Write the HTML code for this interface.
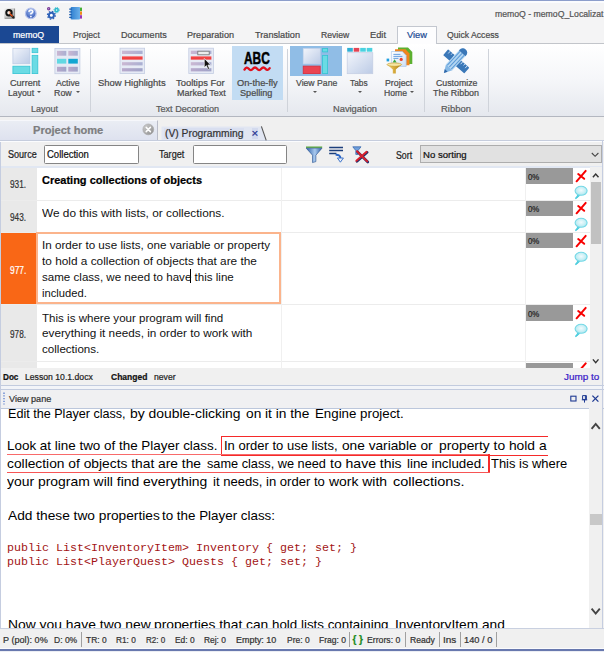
<!DOCTYPE html>
<html lang="en">
<head>
<meta charset="utf-8">
<title>memoQ - memoQ_Localization</title>
<style>
html,body{margin:0;padding:0;background:#fff;}
body{width:604px;height:652px;overflow:hidden;position:relative;font-family:"Liberation Sans",sans-serif;}
#app{position:absolute;left:0;top:0;width:604px;height:652px;overflow:hidden;background:#f0f0f0;}
#app div,#app span,#app svg{position:absolute;}
.t{-webkit-text-stroke:0.22px currentColor;position:absolute;line-height:20px;white-space:nowrap;transform-origin:0 0;z-index:5;font-family:"Liberation Sans",sans-serif;}
.m{font-family:"Liberation Mono",monospace;}
/* title */
#topline{left:0;top:0;width:604px;height:1.4px;background:#8d9ecb;}
#topline2{left:0;top:1.4px;width:604px;height:1.6px;background:#fbfcfe;}
#title{left:0;top:3px;width:604px;height:23px;background:#f4f4f5;}
#tabrow{left:0;top:26px;width:604px;height:17.6px;background:#f4f4f5;border-bottom:1px solid #c2c5ca;box-sizing:border-box;}
#memoqtab{left:0;top:26px;width:58.5px;height:17px;background:#1b4893;}
#viewtab{left:396.5px;top:26px;width:40px;height:18px;background:#fdfdfe;border:1px solid #c3c7cf;border-bottom:none;box-sizing:border-box;}
#ribbon{left:0;top:43.6px;width:604px;height:72.5px;background:linear-gradient(#ffffff,#f5f6f9 50%,#e5e8ee);}
#ribbonline{left:0;top:116.1px;width:604px;height:1.2px;background:#b3b7c0;}
#ribbongap{left:0;top:117.2px;width:604px;height:0.1px;background:#f0f0f0;}
.rsep{width:1px;top:49px;height:63px;background:#cfd3da;}
.hl{background:#c2dcf3;}
.arrow{width:0;height:0;border-left:2px solid transparent;border-right:2px solid transparent;border-top:2.5px solid #555;}
/* doc tab strip */
#tabstrip{left:0;top:117.3px;width:604px;height:23px;background:#f0f0f0;}
#phtab{left:0;top:119.5px;width:157.6px;height:20.8px;background:linear-gradient(#eaedf4,#dee2ef);border-right:1px solid #b9bcc8;border-top:1px solid #f6f7fb;box-sizing:border-box;}
#progtab{left:251.7px;top:128px;width:6.7px;height:10.6px;background:#d3daee;}
#proghl{left:163.5px;top:127.8px;width:80.7px;height:11px;background:#d9dff0;}
#tabline{left:0;top:140.3px;width:604px;height:1px;background:#c6cddd;}
#tabline2{left:0;top:141.3px;width:604px;height:1.4px;background:#fbfcfe;}
/* filter */
#filter{left:0;top:142px;width:604px;height:25px;background:#f0f0f0;}
.inp{background:#fff;border:1px solid #858585;border-radius:1.5px;box-sizing:border-box;}
#sortsel{left:420px;top:145.4px;width:182px;height:17.3px;background:#e1e1e1;border:1px solid #adadad;box-sizing:border-box;}
/* grid */
#grid{left:0;top:167px;width:590px;height:201px;background:#fff;overflow:hidden;}
.num{left:0;width:36.5px;background:#e9e9e9;}
.hline{left:0;width:590px;height:1px;background:#ececec;}
.vline{top:0;width:1px;height:201px;background:#f0f0f0;}
.pct{left:526px;width:46.5px;height:15.5px;background:#999;}
#gscroll{left:590px;top:167px;width:12px;height:201px;background:#f0f0f0;}
#gthumb{left:590.5px;top:182px;width:10.5px;height:61.5px;background:#c1c1c1;}
/* doc bar */
#docbar{left:0;top:368px;width:604px;height:16.5px;background:#f0f0f0;}
#split1{left:0;top:384.5px;width:604px;height:1.5px;background:#c2cbde;}
#split2{left:0;top:386px;width:604px;height:3px;background:#f2f4f8;}
#split3{left:0;top:389px;width:604px;height:1px;background:#c2cbde;}
#vphead{left:0;top:390px;width:604px;height:18.7px;background:#f0f0f2;border-bottom:1px solid #bcc7dc;box-sizing:border-box;}
#vp{left:1.3px;top:408.7px;width:587.7px;height:219.8px;background:#fff;overflow:hidden;}
#vp .t{z-index:1;-webkit-text-stroke:0;}
.ns{-webkit-text-stroke:0 !important;}
#vpscroll{left:589px;top:408px;width:13px;height:220.5px;background:#f0f0f0;}
#vpthumb{left:589.5px;top:513.5px;width:12px;height:11.5px;background:#c8c8c8;}
.redl{background:#f52a2a;}
/* status */
#status{left:0;top:628.2px;width:604px;height:19.8px;background:#f0f0f0;border-top:0.9px solid #c9d0e0;box-sizing:border-box;}
#botline{left:0;top:648px;width:604px;height:4px;background:linear-gradient(#fbfbfd 0,#fbfbfd 35%,#6878ae 36%,#6878ae 72%,#eceef4 73%);}
.ssep{top:631.5px;width:1px;height:15px;background:#a0a0a0;}
#lborder{left:0;top:142px;width:1.2px;height:487px;background:#c5cde0;}
#rborder{left:602.3px;top:140.3px;width:1.2px;height:488.7px;background:#c5cde0;}
</style>
</head>
<body>
<div id="app">
<div id="topline"></div><div id="topline2"></div>
<div id="title"></div>
<div id="tabrow"></div>
<div id="memoqtab"></div>
<div id="ribbon"></div>
<div id="viewtab"></div>
<div id="ribbonline"></div><div id="ribbongap"></div>
<!-- ribbon highlights -->
<div class="hl" style="left:231.5px;top:46px;width:51.5px;height:53.5px;"></div>
<div class="hl" style="left:290px;top:46px;width:51.5px;height:30px;background:#90bde6;"></div>
<div class="rsep" style="left:89.5px;"></div>
<div class="rsep" style="left:287px;"></div>
<div class="rsep" style="left:424px;"></div>
<div class="rsep" style="left:487.5px;"></div>
<!-- quick access icons -->
<svg style="left:3px;top:6px;" width="84" height="16" viewBox="3 6 84 16">
  <defs>
    <linearGradient id="gq" x1="0" y1="0" x2="1" y2="1"><stop offset="0" stop-color="#f4f4f4"/><stop offset="1" stop-color="#9a9a9a"/></linearGradient>
    <linearGradient id="gqo" x1="0" y1="0" x2="1" y2="0"><stop offset="0.3" stop-color="#fff"/><stop offset="1" stop-color="#f0621c"/></linearGradient>
    <radialGradient id="gh" cx="0.5" cy="0.35" r="0.7"><stop offset="0" stop-color="#9db8ee"/><stop offset="1" stop-color="#2a4fb0"/></radialGradient>
    <linearGradient id="gn" x1="0" y1="0" x2="1" y2="0"><stop offset="0" stop-color="#2f7fd0"/><stop offset="1" stop-color="#6ab0ea"/></linearGradient>
  </defs>
  <rect x="4.2" y="8.2" width="10.8" height="10.4" rx="1" fill="url(#gq)"/>
  <path d="M14.6 8.6 V18.3 H4.6" fill="none" stroke="#8a8a8a" stroke-width="0.9"/>
  <circle cx="9" cy="12.7" r="2.7" fill="url(#gqo)" stroke="#111" stroke-width="2"/>
  <path d="M10.6 14.6 L13.4 17.4" stroke="#222" stroke-width="2.2" stroke-linecap="round"/>
  <path d="M10.4 14.2 L12.2 16" stroke="#e8501a" stroke-width="1.4" stroke-linecap="round"/>
  <circle cx="30.8" cy="13.4" r="5.3" fill="url(#gh)" stroke="#b4c2ec" stroke-width="1.3"/>
  <path d="M28.9 11.9 Q29 10 30.9 10 Q32.8 10 32.8 11.7 Q32.8 12.8 30.9 13.6 L30.9 14.6" fill="none" stroke="#fff" stroke-width="1.5"/>
  <circle cx="30.9" cy="16.6" r="0.9" fill="#fff"/>
  <!-- gears -->
  <circle cx="51.4" cy="15.3" r="2.5" fill="#fff" stroke="#2f62b8" stroke-width="2"/>
  <circle cx="51.4" cy="15.3" r="3.9" fill="none" stroke="#2f62b8" stroke-width="1.3" stroke-dasharray="1.5 1.56"/>
  <circle cx="48.7" cy="8.7" r="1.1" fill="#fff" stroke="#7a3a9a" stroke-width="1.3"/>
  <circle cx="56.6" cy="10.1" r="1.6" fill="#d8f6fa" stroke="#2cb8cc" stroke-width="1.6"/>
  <circle cx="56.6" cy="10.1" r="2.7" fill="none" stroke="#2cb8cc" stroke-width="0.9" stroke-dasharray="1.1 1.02"/>
  <!-- notebook -->
  <rect x="79.3" y="7.6" width="2.7" height="3.4" fill="#45b035"/>
  <rect x="79.3" y="11.4" width="2.7" height="3.4" fill="#f08a1c"/>
  <rect x="79.3" y="15.2" width="2.7" height="3.4" fill="#9a35b5"/>
  <rect x="70.6" y="7" width="9.4" height="12.4" rx="1" fill="url(#gn)"/>
  <path d="M69.2 9.2h2.6M69.2 11.9h2.6M69.2 14.6h2.6M69.2 17.3h2.6" stroke="#1f5fb0" stroke-width="1.3"/>
</svg>
<!-- ribbon: Current Layout -->
<svg style="left:12px;top:47px;" width="27" height="28" viewBox="12 47 27 28">
  <defs>
    <linearGradient id="gp" x1="0" y1="0" x2="1" y2="1"><stop offset="0" stop-color="#f2f5fb"/><stop offset="1" stop-color="#bccbe6"/></linearGradient>
    <linearGradient id="gs" x1="0" y1="0" x2="1" y2="0"><stop offset="0" stop-color="#cbb7d2"/><stop offset="1" stop-color="#a9afd2"/></linearGradient>
    <linearGradient id="gs2" x1="0" y1="0" x2="1" y2="0"><stop offset="0" stop-color="#b9a9cc"/><stop offset="1" stop-color="#9fa3c8"/></linearGradient>
    <linearGradient id="gr" x1="0" y1="0" x2="0" y2="1"><stop offset="0" stop-color="#f87a7a"/><stop offset="0.5" stop-color="#ee3030"/><stop offset="1" stop-color="#f46a6a"/></linearGradient>
  </defs>
  <rect x="12.9" y="48.3" width="17" height="15.5" fill="url(#gp)" stroke="#b9c8e2" stroke-width="0.7"/>
  <rect x="12.9" y="66.2" width="17" height="7.4" fill="#6adbe4" stroke="#35c3d3" stroke-width="0.8"/>
  <rect x="32.1" y="48.3" width="5.7" height="4.4" fill="#6adbe4" stroke="#35c3d3" stroke-width="0.8"/>
  <rect x="32.1" y="55.3" width="5.7" height="18.3" fill="#6adbe4" stroke="#35c3d3" stroke-width="0.8"/>
</svg>
<!-- Active Row -->
<svg style="left:54px;top:47px;" width="27" height="28" viewBox="54 47 27 28">
  <rect x="54.9" y="48.4" width="25" height="25.3" fill="#e6eaf5" stroke="#c3cce2" stroke-width="0.8"/>
  <rect x="57" y="50.9" width="9.3" height="4.8" fill="url(#gs)"/><rect x="68.3" y="50.9" width="9.5" height="4.8" fill="url(#gs)"/>
  <rect x="57" y="58.8" width="9.3" height="4.8" fill="#62d8e2"/><rect x="68.3" y="58.8" width="9.5" height="4.8" fill="#12a6d2"/>
  <rect x="57" y="66.8" width="9.3" height="4.8" fill="url(#gs2)"/><rect x="68.3" y="66.8" width="9.5" height="4.8" fill="url(#gs2)"/>
</svg>
<!-- Show Highlights -->
<svg style="left:119px;top:47px;" width="27" height="28" viewBox="119 47 27 28">
  <rect x="120" y="48.2" width="24.6" height="25.3" fill="#e6eaf5" stroke="#c3cce2" stroke-width="0.8"/>
  <rect x="122" y="50.7" width="20.6" height="3.3" fill="url(#gs)"/>
  <rect x="122" y="56.2" width="20.6" height="3.6" fill="url(#gr)"/>
  <rect x="122" y="62.2" width="20.6" height="3.2" fill="url(#gs)"/>
  <rect x="122" y="68.2" width="20.6" height="3.2" fill="url(#gs2)"/>
</svg>
<!-- Tooltips -->
<svg style="left:188px;top:47px;" width="27" height="28" viewBox="188 47 27 28">
  <rect x="188.8" y="48.2" width="24.6" height="25.3" fill="#e6eaf5" stroke="#c3cce2" stroke-width="0.8"/>
  <rect x="190.8" y="50.7" width="20.6" height="3.3" fill="url(#gs)"/>
  <rect x="190.8" y="56.2" width="20.6" height="3.6" fill="url(#gr)"/>
  <rect x="190.8" y="62.2" width="20.6" height="3.2" fill="url(#gs)"/>
  <rect x="190.8" y="68.2" width="20.6" height="3.2" fill="url(#gs2)"/>
  <rect x="197.8" y="51.2" width="11.4" height="3.6" fill="#ececec" stroke="#707070" stroke-width="0.8"/>
  <path d="M204.3 58.4 L204.3 67.6 L206.4 65.6 L208 69.4 L209.5 68.7 L207.9 65 L210.6 64.9 Z" fill="#111" stroke="#fff" stroke-width="0.6"/>
</svg>
<!-- ABC wavy underline -->
<svg style="left:243px;top:65px;" width="29" height="8" viewBox="243 65 29 8">
  <path d="M244.5 69.6 Q246.6 66.2 248.7 68.8 T252.9 68.8 T257.1 68.8 T261.3 68.8 T265.5 68.8 T269.7 68.2" fill="none" stroke="#e0101c" stroke-width="2.3" stroke-linecap="round"/>
</svg>
<!-- View Pane -->
<svg style="left:302px;top:47px;" width="27" height="28" viewBox="302 47 27 28">
  <rect x="303.2" y="48.5" width="17" height="15.4" fill="url(#gp)" stroke="#c6d3ea" stroke-width="0.6"/>
  <rect x="303.2" y="66.1" width="17" height="7.5" fill="#ea4452" stroke="#d82c3c" stroke-width="0.8"/>
  <rect x="322.6" y="48.5" width="5" height="3.4" fill="#6adbe4" stroke="#35c3d3" stroke-width="0.8"/>
  <rect x="322.6" y="55.4" width="5" height="18.2" fill="#6adbe4" stroke="#35c3d3" stroke-width="0.8"/>
</svg>
<!-- Tabs -->
<svg style="left:346px;top:47px;" width="28" height="28" viewBox="346 47 28 28">
  <rect x="347.2" y="52.7" width="25.6" height="21" fill="url(#gp)" stroke="#c3cce2" stroke-width="0.7"/>
  <rect x="347.2" y="47.9" width="5.6" height="3.8" fill="#2fb0d4"/>
  <rect x="353.7" y="47.9" width="5.6" height="3.8" fill="#e24454"/>
  <rect x="360.2" y="47.9" width="5.6" height="3.8" fill="#4ad2e0"/>
  <rect x="366.7" y="47.9" width="5.6" height="3.8" fill="#4ad2e0"/>
</svg>
<!-- Project Home -->
<svg style="left:385px;top:46px;" width="29" height="29" viewBox="385 46 29 29">
  <defs>
    <linearGradient id="gf" x1="0" y1="0" x2="1" y2="0"><stop offset="0" stop-color="#f3dc8c"/><stop offset="0.5" stop-color="#d6a93a"/><stop offset="1" stop-color="#a87c1c"/></linearGradient>
    <linearGradient id="gd" x1="0" y1="0" x2="1" y2="1"><stop offset="0" stop-color="#ffffff"/><stop offset="1" stop-color="#cfe0f6"/></linearGradient>
  </defs>
  <path d="M398 47.6 H408 L412.3 52 V63.9 H398 Z" fill="#5cb030"/>
  <path d="M395 49.3 H405.5 L409.5 53.4 V65.2 H395 Z" fill="#f0841e"/>
  <path d="M391.4 51.5 H402.4 L406.2 55.4 V66.4 H391.4 Z" fill="url(#gd)" stroke="#9fc0ea" stroke-width="0.6"/>
  <path d="M393.4 54.4h7M393.4 56.4h9M393.4 58.4h5" stroke="#5a96dc" stroke-width="0.9"/>
  <circle cx="401.2" cy="59.4" r="1.6" fill="#ea4030"/>
  <path d="M394.6 59.2 L396.6 62.4 H392.6 Z" fill="#3aa840"/>
  <rect x="386.6" y="58.6" width="2.6" height="2.8" fill="#20a0e0"/>
  <path d="M387 64.6 Q394.3 61.6 401.6 64.6 L395.8 69.6 V73.4 H392.8 V69.6 Z" fill="url(#gf)"/>
  <ellipse cx="394.3" cy="64.6" rx="7.3" ry="1.7" fill="#f6e6a4" stroke="#c49a30" stroke-width="0.6"/>
</svg>
<!-- Customize the ribbon -->
<svg style="left:441px;top:46px;" width="30" height="29" viewBox="441 46 30 29">
  <g transform="rotate(41 456.2 61.4)">
    <rect x="442.2" y="57.6" width="28" height="7.6" rx="0.6" fill="#3b78b8"/>
    <path d="M445 57.6v3M448 57.6v2M451 57.6v3M461.4 57.6v3M464.4 57.6v2M467.4 57.6v3" stroke="#cfe2f6" stroke-width="0.9"/>
  </g>
  <g transform="rotate(-47 454.8 61.2)">
    <path d="M446.6 56.8 H466 Q470.6 56.8 470.6 61.2 Q470.6 65.6 466 65.6 H446.6 Z" fill="#b4d7f3"/>
    <path d="M446.6 58.4H465.5M446.6 61.2H465.5M446.6 64H465.5" stroke="#5c9ad6" stroke-width="1"/>
    <path d="M465.6 56.8 Q470.8 56.8 470.8 61.2 Q470.8 65.6 465.6 65.6 Z" fill="#3b78b8"/>
    <path d="M446.6 56.8 L438.8 61.2 L446.6 65.6 Z" fill="#86b9e6"/>
    <path d="M442.2 59.3 L438.8 61.2 L442.2 63.1 Z" fill="#2f66a8"/>
  </g>
</svg>

<div class="arrow" style="left:37px;top:90.5px;"></div>
<div class="arrow" style="left:75.5px;top:90.5px;"></div>
<div class="arrow" style="left:313px;top:91px;"></div>
<div class="arrow" style="left:357.5px;top:91px;"></div>
<div class="arrow" style="left:410px;top:90.5px;"></div>

<div id="tabstrip"></div>
<div id="phtab"></div>
<svg style="left:160px;top:125px;" width="110" height="17" viewBox="160 125 110 17"><path d="M161.5 126.5 H261.4 L266.2 140.4 H161.5 Z" fill="#e1e6f2"/></svg>
<div id="proghl"></div><div id="progtab"></div>
<div id="tabline"></div><div id="tabline2"></div>
<div id="filter"></div>
<div class="inp" style="left:44px;top:145px;width:95px;height:18.5px;"></div>
<div class="inp" style="left:192.5px;top:145px;width:94.5px;height:18.5px;"></div>
<div id="sortsel"></div>

<div id="grid">
  <div class="num" style="top:0;height:65.5px;"></div>
  <div class="num" style="top:65.5px;height:72px;background:#f96716;"></div>
  <div class="num" style="top:137.5px;height:63.5px;"></div>
  <div class="hline" style="top:33px;"></div>
  <div class="hline" style="top:65px;"></div>
  <div class="hline" style="top:137px;"></div>
  <div class="hline" style="top:193.5px;"></div>
  <div class="vline" style="left:281px;"></div>
  <div class="vline" style="left:525px;"></div>
  <div style="left:36.3px;top:65.3px;width:244.7px;height:71.7px;border:2.3px solid #fbb48c;box-sizing:border-box;background:#fff;"></div>
  <div style="left:190px;top:102px;width:1px;height:14px;background:#000;"></div>
  <div class="pct" style="top:1px;"></div>
  <div class="pct" style="top:33.5px;"></div>
  <div class="pct" style="top:65.9px;"></div>
  <div class="pct" style="top:138.3px;"></div>
  <div class="pct" style="top:195.5px;"></div>
</div>
<div style="left:0;top:166.2px;width:602.3px;height:2px;background:#e1e7f2;"></div>
<div id="gscroll"></div><div id="gthumb"></div>
<div id="docbar"></div>
<div id="split1"></div><div id="split2"></div><div id="split3"></div>
<div id="vphead"></div>
<div id="vp">
<span class="t" style="left:6.3px;top:-4.9px;font-size:13.4px;color:#000;transform:scaleX(0.9404);">Edit the Player class,</span>
<span class="t" style="left:129.1px;top:-4.9px;font-size:13.4px;color:#000;transform:scaleX(1.0390);">by double-clicking</span>
<span class="t" style="left:244.9px;top:-4.9px;font-size:13.4px;color:#000;transform:scaleX(1.0243);">on it in the</span>
<span class="t" style="left:313.4px;top:-4.9px;font-size:13.4px;color:#000;transform:scaleX(0.9930);">Engine project.</span>
<span class="t" style="left:6.2px;top:27.1px;font-size:13.4px;color:#000;transform:scaleX(1.0028);">Look at line two of the Player class.</span>
<span class="t" style="left:222.5px;top:27.1px;font-size:13.4px;color:#000;transform:scaleX(0.9721);">In order to use lists,</span>
<span class="t" style="left:341.1px;top:27.1px;font-size:13.4px;color:#000;transform:scaleX(1.0226);">one variable or</span>
<span class="t" style="left:437.7px;top:27.1px;font-size:13.4px;color:#000;transform:scaleX(1.0324);">property to hold a</span>
<span class="t" style="left:6.2px;top:45.0px;font-size:13.4px;color:#000;transform:scaleX(1.0301);">collection of objects that are the</span>
<span class="t" style="left:205.3px;top:45.0px;font-size:13.4px;color:#000;transform:scaleX(0.9508);">same class, we need</span>
<span class="t" style="left:328.7px;top:45.0px;font-size:13.4px;color:#000;transform:scaleX(1.0455);">to have this</span>
<span class="t" style="left:405.3px;top:45.0px;font-size:13.4px;color:#000;transform:scaleX(0.9952);">line included.</span>
<span class="t" style="left:489.7px;top:45.0px;font-size:13.4px;color:#000;transform:scaleX(0.9659);">This is where</span>
<span class="t" style="left:6.2px;top:62.9px;font-size:13.4px;color:#000;transform:scaleX(1.0391);">your program will find everything</span>
<span class="t" style="left:211.3px;top:62.9px;font-size:13.4px;color:#000;transform:scaleX(0.9752);">it needs, in order to</span>
<span class="t" style="left:327.7px;top:62.9px;font-size:13.4px;color:#000;transform:scaleX(1.0392);">work with</span>
<span class="t" style="left:391.7px;top:62.9px;font-size:13.4px;color:#000;transform:scaleX(1.0792);">collections.</span>
<span class="t" style="left:6.3px;top:97.2px;font-size:13.4px;color:#000;transform:scaleX(1.0247);">Add these two properties</span>
<span class="t" style="left:161.2px;top:97.2px;font-size:13.4px;color:#000;transform:scaleX(0.9988);">to the Player class:</span>
<span class="t m" style="left:5.3px;top:129.2px;font-size:11.67px;color:#a31515;transform:scaleX(1.0007);">public List&lt;InventoryItem&gt; Inventory { get; set; }</span>
<span class="t m" style="left:5.3px;top:143.3px;font-size:11.67px;color:#a31515;transform:scaleX(1.0007);">public List&lt;PlayerQuest&gt; Quests { get; set; }</span>
<span class="t" style="left:6.3px;top:206.4px;font-size:13.4px;color:#000;transform:scaleX(1.0363);">Now you have two new</span>
<span class="t" style="left:152.7px;top:206.4px;font-size:13.4px;color:#000;transform:scaleX(1.0305);">properties that can</span>
<span class="t" style="left:270.4px;top:206.4px;font-size:13.4px;color:#000;transform:scaleX(0.9968);">hold lists containing</span>
<span class="t" style="left:394.0px;top:206.4px;font-size:13.4px;color:#000;transform:scaleX(1.0253);">InventoryItem and</span>
  <!-- red inline box: fragment 1 -->
  <div class="redl" style="left:219.5px;top:27.4px;width:327px;height:1.2px;"></div>
  <div class="redl" style="left:219.5px;top:27.4px;width:1.2px;height:19.6px;"></div>
  <div class="redl" style="left:219.5px;top:45.9px;width:327px;height:1.2px;"></div>
  <!-- fragment 2 -->
  <div class="redl" style="left:5.7px;top:44.9px;width:482.7px;height:1.3px;background:#f86a6a;"></div>
  <div class="redl" style="left:487.2px;top:45px;width:1.2px;height:19.8px;"></div>
  <div class="redl" style="left:5.7px;top:63.5px;width:482.7px;height:1.3px;background:#f75555;"></div>
</div>
<div id="vpscroll"></div><div id="vpthumb"></div>
<div id="status"></div>
<div class="ssep" style="left:80.5px;"></div>
<div class="ssep" style="left:349px;"></div>
<div class="ssep" style="left:404.5px;"></div>
<div class="ssep" style="left:438.5px;"></div>
<div class="ssep" style="left:459.5px;"></div>
<div class="ssep" style="left:496px;"></div>
<div id="botline"></div>
<div id="lborder"></div><div id="rborder"></div>
<svg style="left:142px;top:123px;" width="13" height="13" viewBox="142 123 13 13">
  <defs><linearGradient id="gcl" x1="0" y1="0" x2="1" y2="1"><stop offset="0" stop-color="#d0d0d0"/><stop offset="1" stop-color="#8c8c8c"/></linearGradient></defs><circle cx="148.3" cy="129.4" r="5.4" fill="url(#gcl)" stroke="#a4a4a4" stroke-width="0.6"/>
  <path d="M146.2 127.4 L150.4 131.6 M150.4 127.4 L146.2 131.6" stroke="#fff" stroke-width="1.5" stroke-linecap="round"/>
</svg>
<svg style="left:258px;top:122px;" width="12" height="20" viewBox="258 122 12 20">
  <path d="M261.4 126.4 L266.2 140.4" stroke="#555" stroke-width="1.1" fill="none"/>
</svg>
<svg style="left:304px;top:144px;" width="68" height="20" viewBox="304 144 68 20">
  <defs>
    <linearGradient id="gfu" x1="0" y1="0" x2="1" y2="0"><stop offset="0" stop-color="#2c5fa8"/><stop offset="0.55" stop-color="#a9c9ee"/><stop offset="1" stop-color="#2c5fa8"/></linearGradient>
  </defs>
  <path d="M306 147.2 H322.2" stroke="#58a83c" stroke-width="1.4"/>
  <path d="M306.2 148.2 H322 L315.9 155.2 V161.6 L312.5 162.6 V155.2 Z" fill="url(#gfu)" stroke="#27518f" stroke-width="0.6"/>
  <path d="M329.2 147.6 H343 M329.2 150.5 H343 M329.2 153.4 H336.4" stroke="#1c3f7c" stroke-width="1.5"/>
  <path d="M335.6 154.8 Q340.4 154.6 340.4 158.2" fill="none" stroke="#2c66c4" stroke-width="2"/>
  <path d="M337.4 158 H343.4 L340.4 162.2 Z" fill="#eaf2fc" stroke="#2c66c4" stroke-width="0.9"/>
  <path d="M352.8 146.8 H361 L358 150.6 V154.4 L355.8 154.4 V150.6 Z" fill="#6f9fdc" stroke="#2c5fa8" stroke-width="0.7"/>
  <path d="M357.6 151.8 L367.8 162 M367.2 152.4 L357 161.4" stroke="#1c2c6c" stroke-width="2.6" stroke-linecap="round"/>
  <path d="M357 151.2 L367.2 161.4 M366.6 151.8 L356.4 160.8" stroke="#d8202c" stroke-width="2" stroke-linecap="round"/>
</svg>
<svg style="left:590px;top:150px;" width="12" height="10" viewBox="590 150 12 10">
  <path d="M591.8 153 L595.1 156.3 L598.4 153" fill="none" stroke="#444" stroke-width="1.1"/>
</svg>
<svg style="left:0;top:0;" width="0" height="0"><defs><radialGradient id="gbub" cx="0.5" cy="0.45" r="0.6"><stop offset="0" stop-color="#f2fbfd"/><stop offset="1" stop-color="#a8e6ef"/></radialGradient></defs></svg>
<svg style="left:574px;top:168px;" width="15" height="16" viewBox="574 168 15 16">
  <path d="M585.7 170.9 L576.6 181.3 M578.2 174 L584.2 178.8" stroke="#f80000" stroke-width="2" stroke-linecap="round"/>
</svg>
<svg style="left:574px;top:200px;" width="15" height="16" viewBox="574 168 15 16">
  <path d="M585.7 170.9 L576.6 181.3 M578.2 174 L584.2 178.8" stroke="#f80000" stroke-width="2" stroke-linecap="round"/>
</svg>
<svg style="left:574px;top:232.5px;" width="15" height="16" viewBox="574 168 15 16">
  <path d="M585.7 170.9 L576.6 181.3 M578.2 174 L584.2 178.8" stroke="#f80000" stroke-width="2" stroke-linecap="round"/>
</svg>
<svg style="left:574px;top:305px;" width="15" height="16" viewBox="574 168 15 16">
  <path d="M585.7 170.9 L576.6 181.3 M578.2 174 L584.2 178.8" stroke="#f80000" stroke-width="2" stroke-linecap="round"/>
</svg>
<svg style="left:573px;top:184.0px;" width="17" height="17" viewBox="573 184 17 17">
  <path d="M575.4 198.6 Q578.2 197 578.6 195" fill="none" stroke="#39c6d8" stroke-width="1.6"/>
  <path d="M575.4 198.6 L580.6 195.4 L577.6 194.2 Z" fill="#52cfe0"/>
  <ellipse cx="581.1" cy="190.8" rx="6" ry="4.5" fill="url(#gbub)" stroke="#74d8e6" stroke-width="1.1"/>
</svg>
<svg style="left:573px;top:216.2px;" width="17" height="17" viewBox="573 184 17 17">
  <path d="M575.4 198.6 Q578.2 197 578.6 195" fill="none" stroke="#39c6d8" stroke-width="1.6"/>
  <path d="M575.4 198.6 L580.6 195.4 L577.6 194.2 Z" fill="#52cfe0"/>
  <ellipse cx="581.1" cy="190.8" rx="6" ry="4.5" fill="url(#gbub)" stroke="#74d8e6" stroke-width="1.1"/>
</svg>
<svg style="left:573px;top:249.7px;" width="17" height="17" viewBox="573 184 17 17">
  <path d="M575.4 198.6 Q578.2 197 578.6 195" fill="none" stroke="#39c6d8" stroke-width="1.6"/>
  <path d="M575.4 198.6 L580.6 195.4 L577.6 194.2 Z" fill="#52cfe0"/>
  <ellipse cx="581.1" cy="190.8" rx="6" ry="4.5" fill="url(#gbub)" stroke="#74d8e6" stroke-width="1.1"/>
</svg>
<svg style="left:573px;top:322.2px;" width="17" height="17" viewBox="573 184 17 17">
  <path d="M575.4 198.6 Q578.2 197 578.6 195" fill="none" stroke="#39c6d8" stroke-width="1.6"/>
  <path d="M575.4 198.6 L580.6 195.4 L577.6 194.2 Z" fill="#52cfe0"/>
  <ellipse cx="581.1" cy="190.8" rx="6" ry="4.5" fill="url(#gbub)" stroke="#74d8e6" stroke-width="1.1"/>
</svg>
<svg style="left:574px;top:360px;" width="15" height="8" viewBox="574 360 15 8">
  <path d="M585.7 363.4 L576.6 373.8" stroke="#f80000" stroke-width="2" stroke-linecap="round"/>
</svg>
<svg style="left:590px;top:170px;" width="12" height="10" viewBox="590 170 12 10">
  <path d="M592.9 177.3 L595.7 174 L598.5 177.3" fill="none" stroke="#333" stroke-width="1.4"/>
</svg>
<svg style="left:590px;top:356px;" width="12" height="10" viewBox="590 356 12 10">
  <path d="M592.9 359.4 L595.7 362.7 L598.5 359.4" fill="none" stroke="#333" stroke-width="1.4"/>
</svg>
<svg style="left:589px;top:420px;" width="14" height="12" viewBox="589 420 14 12">
  <path d="M591.6 428.9 L595.7 423.9 L599.8 428.9" fill="none" stroke="#444" stroke-width="1.9"/>
</svg>
<svg style="left:589px;top:605px;" width="14" height="12" viewBox="589 605 14 12">
  <path d="M591.6 608.7 L595.7 613.6 L599.8 608.7" fill="none" stroke="#444" stroke-width="1.9"/>
</svg>
<svg style="left:2px;top:391px;" width="6" height="15" viewBox="2 391 6 15">
  <path d="M4 392.6v12" stroke="#5a7fcf" stroke-width="1.3" stroke-dasharray="1.3 1.4"/>
</svg>
<svg style="left:568px;top:393px;" width="34" height="12" viewBox="568 393 34 12">
  <rect x="570.8" y="396.2" width="5.2" height="4.8" fill="none" stroke="#1f3a93" stroke-width="1.1"/>
  <path d="M582.6 395.6 H586.4 V399.6 H582.6 Z M585.4 395.6 V399.6 M581.8 399.8 H587.2 M584.5 399.8 V402.6" fill="none" stroke="#1f3a93" stroke-width="1"/>
  <path d="M592.4 395.6 L598.4 401.6 M598.4 395.6 L592.4 401.6" stroke="#1f3a93" stroke-width="1.3"/>
</svg>
<span class="t" style="left:495.0px;top:3.9px;font-size:8.8px;color:#555;transform:scaleX(0.9864);">memoQ - memoQ_Localizat</span>
<span class="t" style="left:13.0px;top:25.1px;font-size:9.2px;color:#fff;transform:scaleX(0.9545);">memoQ</span>
<span class="t" style="left:72.5px;top:25.1px;font-size:9.2px;color:#4a4a4a;transform:scaleX(0.9368);">Project</span>
<span class="t" style="left:120.6px;top:25.1px;font-size:9.2px;color:#4a4a4a;transform:scaleX(0.9835);">Documents</span>
<span class="t" style="left:187.0px;top:25.1px;font-size:9.2px;color:#4a4a4a;transform:scaleX(0.9895);">Preparation</span>
<span class="t" style="left:255.0px;top:25.1px;font-size:9.2px;color:#4a4a4a;transform:scaleX(0.9976);">Translation</span>
<span class="t" style="left:321.0px;top:25.1px;font-size:9.2px;color:#4a4a4a;transform:scaleX(0.9394);">Review</span>
<span class="t" style="left:370.0px;top:25.1px;font-size:9.2px;color:#4a4a4a;transform:scaleX(1.0099);">Edit</span>
<span class="t" style="left:406.7px;top:25.1px;font-size:9.2px;color:#1c4a94;transform:scaleX(1.0127);">View</span>
<span class="t" style="left:446.8px;top:25.1px;font-size:9.2px;color:#4a4a4a;transform:scaleX(0.9410);">Quick Access</span>
<span class="t" style="left:9.9px;top:72.7px;font-size:9.2px;color:#4a4a4a;transform:scaleX(0.9889);">Current</span>
<span class="t" style="left:7.5px;top:82.7px;font-size:9.2px;color:#4a4a4a;transform:scaleX(0.9459);">Layout</span>
<span class="t" style="left:55.5px;top:72.7px;font-size:9.2px;color:#4a4a4a;transform:scaleX(0.9428);">Active</span>
<span class="t" style="left:54.3px;top:82.7px;font-size:9.2px;color:#4a4a4a;transform:scaleX(0.9624);">Row</span>
<span class="t" style="left:98.0px;top:72.7px;font-size:9.2px;color:#4a4a4a;transform:scaleX(1.0275);">Show Highlights</span>
<span class="t" style="left:176.4px;top:72.7px;font-size:9.2px;color:#4a4a4a;transform:scaleX(1.0235);">Tooltips For</span>
<span class="t" style="left:177.0px;top:82.7px;font-size:9.2px;color:#4a4a4a;transform:scaleX(0.9784);">Marked Text</span>
<span class="t" style="left:237.0px;top:72.7px;font-size:9.2px;color:#4a4a4a;transform:scaleX(1.0088);">On-the-fly</span>
<span class="t" style="left:240.3px;top:82.7px;font-size:9.2px;color:#4a4a4a;transform:scaleX(0.9907);">Spelling</span>
<span class="t" style="left:295.6px;top:72.7px;font-size:9.2px;color:#4a4a4a;transform:scaleX(0.9437);">View Pane</span>
<span class="t" style="left:350.4px;top:72.7px;font-size:9.2px;color:#4a4a4a;transform:scaleX(0.9069);">Tabs</span>
<span class="t" style="left:385.4px;top:72.7px;font-size:9.2px;color:#4a4a4a;transform:scaleX(0.9577);">Project</span>
<span class="t" style="left:383.5px;top:82.7px;font-size:9.2px;color:#4a4a4a;transform:scaleX(0.9382);">Home</span>
<span class="t" style="left:435.6px;top:72.7px;font-size:9.2px;color:#4a4a4a;transform:scaleX(0.9538);">Customize</span>
<span class="t" style="left:433.0px;top:82.7px;font-size:9.2px;color:#4a4a4a;transform:scaleX(0.9684);">The Ribbon</span>
<span class="t" style="left:244.3px;top:47.9px;font-size:17.2px;color:#000;font-weight:bold;transform:scaleX(0.6926);-webkit-text-stroke:0.5px #000;">ABC</span>
<span class="t" style="left:31.1px;top:99.2px;font-size:9.2px;color:#5a5a5a;transform:scaleX(0.9749);">Layout</span>
<span class="t" style="left:156.0px;top:99.2px;font-size:9.2px;color:#5a5a5a;transform:scaleX(0.9868);">Text Decoration</span>
<span class="t" style="left:333.0px;top:99.2px;font-size:9.2px;color:#5a5a5a;transform:scaleX(1.0133);">Navigation</span>
<span class="t" style="left:440.6px;top:99.2px;font-size:9.2px;color:#5a5a5a;transform:scaleX(1.0266);">Ribbon</span>
<span class="t" style="left:32.8px;top:120.5px;font-size:10.2px;color:#7d7d80;font-weight:bold;transform:scaleX(1.0876);">Project home</span>
<span class="t" style="left:165.0px;top:123.3px;font-size:10.6px;color:#333;transform:scaleX(0.9720);">(V) Programming</span>
<span class="t" style="left:251.5px;top:123.2px;font-size:11.5px;color:#1c2c8c;">×</span>
<span class="t" style="left:8.0px;top:145.0px;font-size:10px;color:#222;transform:scaleX(0.9057);">Source</span>
<span class="t" style="left:47.2px;top:144.8px;font-size:10px;color:#111;transform:scaleX(0.9517);">Collection</span>
<span class="t" style="left:159.0px;top:145.0px;font-size:10px;color:#222;transform:scaleX(0.9102);">Target</span>
<span class="t" style="left:395.6px;top:145.6px;font-size:10px;color:#222;transform:scaleX(0.8777);">Sort</span>
<span class="t" style="left:423.3px;top:145.0px;font-size:9.4px;color:#111;transform:scaleX(1.0226);">No sorting</span>
<span class="t" style="left:10.0px;top:175.0px;font-size:10.4px;color:#333;transform:scaleX(0.7907);">931.</span>
<span class="t" style="left:10.0px;top:207.5px;font-size:10.4px;color:#333;transform:scaleX(0.7907);">943.</span>
<span class="t" style="left:9.6px;top:260.8px;font-size:10.4px;color:#fff;transform:scaleX(0.8105);">977.</span>
<span class="t" style="left:10.0px;top:324.5px;font-size:10.4px;color:#333;transform:scaleX(0.7907);">978.</span>
<span class="t" style="left:41.7px;top:170.2px;font-size:11px;color:#000;font-weight:bold;transform:scaleX(0.9991);">Creating collections of objects</span>
<span class="t ns" style="left:41.7px;top:202.6px;font-size:11.4px;color:#111;transform:scaleX(1.0382);">We do this with lists, or collections.</span>
<span class="t ns" style="left:41.7px;top:235.2px;font-size:11.4px;color:#111;transform:scaleX(1.0234);">In order to use lists, one variable or property</span>
<span class="t ns" style="left:41.7px;top:251.2px;font-size:11.4px;color:#111;transform:scaleX(1.0379);">to hold a collection of objects that are the</span>
<span class="t ns" style="left:41.7px;top:267.0px;font-size:11.4px;color:#111;transform:scaleX(1.0165);">same class, we need to have this line</span>
<span class="t ns" style="left:41.7px;top:282.6px;font-size:11.4px;color:#111;transform:scaleX(0.9823);">included.</span>
<span class="t ns" style="left:41.7px;top:307.8px;font-size:11.4px;color:#111;transform:scaleX(1.0156);">This is where your program will find</span>
<span class="t ns" style="left:41.7px;top:323.4px;font-size:11.4px;color:#111;transform:scaleX(1.0315);">everything it needs, in order to work with</span>
<span class="t ns" style="left:41.7px;top:339.1px;font-size:11.4px;color:#111;transform:scaleX(1.0167);">collections.</span>
<span class="t" style="left:527.7px;top:166.5px;font-size:8.8px;color:#222;transform:scaleX(0.8885);">0%</span>
<span class="t" style="left:527.7px;top:198.5px;font-size:8.8px;color:#222;transform:scaleX(0.8885);">0%</span>
<span class="t" style="left:527.7px;top:231.0px;font-size:8.8px;color:#222;transform:scaleX(0.8885);">0%</span>
<span class="t" style="left:527.7px;top:303.5px;font-size:8.8px;color:#222;transform:scaleX(0.8885);">0%</span>
<span class="t" style="left:3.2px;top:367.0px;font-size:9.2px;color:#111;font-weight:bold;transform:scaleX(0.8871);">Doc</span>
<span class="t" style="left:24.8px;top:367.0px;font-size:9.2px;color:#222;transform:scaleX(0.9413);">Lesson 10.1.docx</span>
<span class="t" style="left:110.6px;top:367.0px;font-size:9.2px;color:#111;font-weight:bold;transform:scaleX(0.9259);">Changed</span>
<span class="t" style="left:153.6px;top:367.0px;font-size:9.2px;color:#222;transform:scaleX(0.9398);">never</span>
<span class="t" style="left:563.8px;top:366.9px;font-size:9.6px;color:#3a20c8;transform:scaleX(1.0310);">Jump to</span>
<span class="t" style="left:9.0px;top:389.1px;font-size:9.2px;color:#333;transform:scaleX(0.9895);">View pane</span>
<span class="t" style="left:3.3px;top:629.9px;font-size:9.0px;color:#333;transform:scaleX(1.0077);">P (pol): 0%</span>
<span class="t" style="left:53.6px;top:629.9px;font-size:9.0px;color:#333;transform:scaleX(0.9463);">D: 0%</span>
<span class="t" style="left:86.0px;top:629.9px;font-size:9.0px;color:#333;transform:scaleX(0.9357);">TR: 0</span>
<span class="t" style="left:116.0px;top:629.9px;font-size:9.0px;color:#333;transform:scaleX(0.9203);">R1: 0</span>
<span class="t" style="left:145.7px;top:629.9px;font-size:9.0px;color:#333;transform:scaleX(0.8970);">R2: 0</span>
<span class="t" style="left:174.8px;top:629.9px;font-size:9.0px;color:#333;transform:scaleX(0.9326);">Ed: 0</span>
<span class="t" style="left:203.9px;top:629.9px;font-size:9.0px;color:#333;transform:scaleX(0.9313);">Rej: 0</span>
<span class="t" style="left:235.9px;top:629.9px;font-size:9.0px;color:#333;transform:scaleX(0.9943);">Empty: 10</span>
<span class="t" style="left:286.7px;top:629.9px;font-size:9.0px;color:#333;transform:scaleX(0.9411);">Pre: 0</span>
<span class="t" style="left:318.7px;top:629.9px;font-size:9.0px;color:#333;transform:scaleX(0.9504);">Frag: 0</span>
<span class="t" style="left:352.6px;top:629.5px;font-size:10px;color:#1a8a1a;font-weight:bold;letter-spacing:2.4px;">{}</span>
<span class="t" style="left:367.3px;top:629.9px;font-size:9.0px;color:#333;transform:scaleX(0.9648);">Errors: 0</span>
<span class="t" style="left:410.2px;top:629.9px;font-size:9.0px;color:#333;transform:scaleX(0.9533);">Ready</span>
<span class="t" style="left:443.0px;top:629.9px;font-size:9.0px;color:#333;transform:scaleX(1.1069);">Ins</span>
<span class="t" style="left:464.4px;top:629.9px;font-size:9.0px;color:#333;transform:scaleX(1.0316);">140 / 0</span>
</div>
</body>
</html>
